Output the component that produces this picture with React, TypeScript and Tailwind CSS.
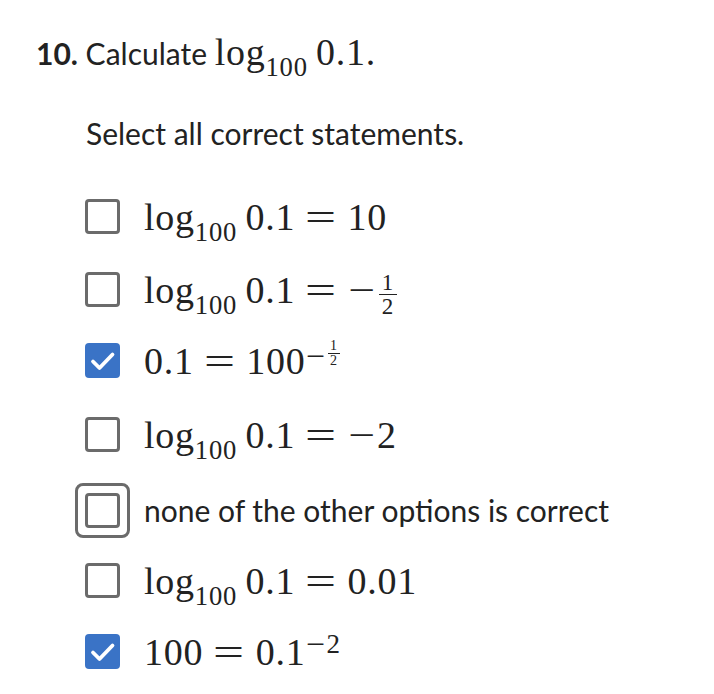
import React from "react";

const serif = { fontFamily: '"Liberation Serif", "DejaVu Serif", serif' };

function Log() {
  return (
    <span className="whitespace-nowrap mr-[0.22em]">
      log<span className="text-[0.7em] relative top-[0.42em]">100</span>
    </span>
  );
}

function Wide({ ch, scale }: { ch: string; scale: string }) {
  return (
    <span className="inline-block w-[0.778em] text-center">
      <span className={`inline-block ${scale}`}>{ch}</span>
    </span>
  );
}

function Eq() {
  return (
    <span className="mx-[0.3em]">
      <Wide ch="=" scale="scale-x-[1.45]" />
    </span>
  );
}

function Minus() {
  return <Wide ch="−" scale="scale-x-[1.25]" />;
}

function Frac({ cls }: { cls: string }) {
  return (
    <span className={`inline-flex flex-col items-center leading-none relative align-baseline ${cls}`}>
      <span className="px-[0.12em]">1</span>
      <span className="w-full border-t-[1.5px] border-[#222]" />
      <span className="px-[0.12em]">2</span>
    </span>
  );
}

function Box({ checked, focused }: { checked?: boolean; focused?: boolean }) {
  const inner = checked ? (
    <span className="w-[35px] h-[35px] shrink-0 rounded-[4px] bg-[#3a73c6] flex items-center justify-center">
      <svg width="35" height="35" viewBox="0 0 35 35">
        <polyline points="8,18.5 14.5,25 27.5,11.5" fill="none" stroke="white" strokeWidth="3.8" strokeLinecap="round" strokeLinejoin="round" />
      </svg>
    </span>
  ) : (
    <span className="w-[35px] h-[35px] shrink-0 rounded-[4px] border-[3px] border-[#6b6b6b] bg-white" />
  );
  if (focused) {
    return (
      <span className="w-[35px] h-[35px] shrink-0 flex items-center justify-center relative">
        <span className="absolute -inset-[10px] rounded-[8px] border-[3px] border-[#6b6b6b]" />
        {inner}
      </span>
    );
  }
  return inner;
}

function Row({ checked, focused, h, children }: { checked?: boolean; focused?: boolean; h: string; children: React.ReactNode }) {
  return (
    <div className={`${h} flex items-start`}>
      <div className="flex items-center gap-[24px] h-[35px]">
        <Box checked={checked} focused={focused} />
        {children}
      </div>
    </div>
  );
}

function MathLine({ children }: { children: React.ReactNode }) {
  return (
    <div className="h-[42px] leading-[42px] text-[38px] tracking-[0.02em] whitespace-nowrap text-[#222]" style={serif}>
      {children}
    </div>
  );
}

export default function App() {
  return (
    <div className="min-h-[694px] w-[714px] bg-white text-[#222]" style={{ fontFamily: 'Lato, "Liberation Sans", sans-serif' }}>
      <div className="pl-[36px] pt-[33px] h-[73px] text-[30px] leading-[40px] whitespace-nowrap">
        <span className="font-bold">10.</span> Calculate{" "}
        <span className="text-[38px] leading-none tracking-[0.02em]" style={serif}>
          <Log />0.1.
        </span>
      </div>
      <div className="pl-[86px] mt-[40px] text-[30px] leading-[40px]">Select all correct statements.</div>
      <div className="pl-[85px] mt-[46px] flex flex-col">
        <Row h="h-[73px]">
          <MathLine>
            <Log />0.1<Eq />10
          </MathLine>
        </Row>
        <Row h="h-[71px]">
          <MathLine>
            <Log />0.1<Eq /><Minus /><Frac cls="text-[23px] -top-[13px] ml-[0.08em]" />
          </MathLine>
        </Row>
        <Row checked h="h-[74px]">
          <MathLine>
            0.1<Eq />100
            <span className="text-[27px] relative -top-[9px]">
              <Minus />
            </span>
            <Frac cls="text-[14px] -top-[24px] ml-[2px]" />
          </MathLine>
        </Row>
        <Row h="h-[76px]">
          <MathLine>
            <Log />0.1<Eq /><Minus />2
          </MathLine>
        </Row>
        <Row focused h="h-[70px]">
          <span className="text-[30px] text-[#222] whitespace-nowrap">none of the other options is correct</span>
        </Row>
        <Row h="h-[71px]">
          <MathLine>
            <Log />0.1<Eq />0.01
          </MathLine>
        </Row>
        <Row checked h="h-[40px]">
          <MathLine>
            100<Eq />0.1
            <span className="text-[27px] relative -top-[12px]">
              <Minus />2
            </span>
          </MathLine>
        </Row>
      </div>
    </div>
  );
}
